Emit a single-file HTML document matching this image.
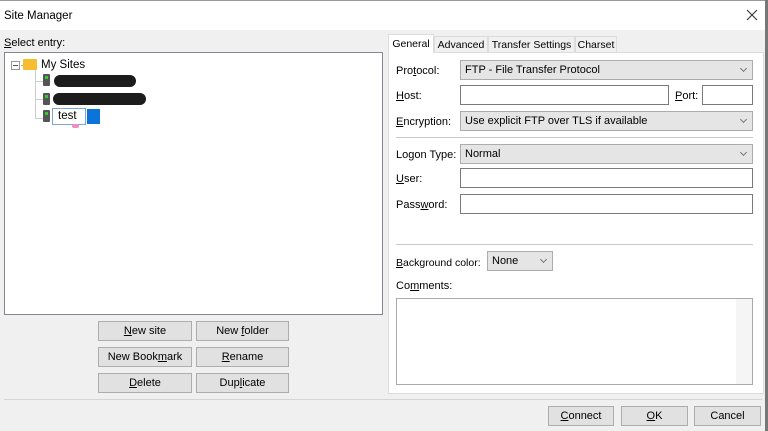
<!DOCTYPE html>
<html><head><style>
*{box-sizing:border-box;margin:0;padding:0}
body{width:768px;height:431px;background:#f0f0f0;font-family:"Liberation Sans",sans-serif;font-size:11px;color:#000;position:relative;overflow:hidden;white-space:nowrap}
.a{position:absolute}
.title{left:0;top:0;width:766px;height:30px;background:#fff;border-top:1px solid #999}
.btn{position:absolute;background:#e1e1e1;border:1px solid #adadad;text-align:center;line-height:18px;font-size:11px}
.inp{position:absolute;background:#fff;border:1px solid #7a7a7a}
.cmb{position:absolute;background:#e5e5e5;border:1px solid #acacac;padding-left:4px;line-height:19px}
.cmb:after{content:"";position:absolute;right:6px;top:5px;width:4px;height:4px;border-right:1px solid #777;border-bottom:1px solid #777;transform:rotate(45deg)}
.lbl{position:absolute}
.sep{position:absolute;height:1px;background:#c8c8c8}
.blk{position:absolute;height:12px;background:#1c1c1c;border-radius:6px}
.pc{position:absolute;width:7px;height:12px;background:#555;border-radius:1px}
.pc:before{content:"";position:absolute;left:2px;top:2px;width:3px;height:3px;background:#3c3}
.tab{position:absolute;top:36px;height:17px;border:1px solid #dcdcdc;line-height:16px;text-align:center}
</style></head><body>
<div class="a title"><span class="a" style="left:4px;top:9px;font-size:11.5px">Site Manager</span>
<svg class="a" style="left:746px;top:8px" width="12" height="12"><path d="M1 1L11 11M11 1L1 11" stroke="#333" stroke-width="1.1"/></svg></div>
<div class="a" style="left:765px;top:0;width:3px;height:431px;background:#777"></div>
<div class="lbl" style="left:4px;top:37px"><u>S</u>elect entry:</div>
<div class="a" style="left:4px;top:52px;width:379px;height:263px;background:#fff;border:1px solid #828790">
 <div class="a" style="left:6px;top:8px;width:9px;height:9px;border:1px solid #999;background:#fff"></div>
 <div class="a" style="left:8px;top:12px;width:5px;height:1px;background:#555"></div>
 <div class="a" style="left:16px;top:12px;width:6px;height:1px;background:#aaa"></div>
 <div class="a" style="left:18px;top:6px;width:14px;height:11px;background:#f5bd2f;border-radius:1px"></div>
 <div class="a" style="left:36px;top:6px;font-size:11.5px">My Sites</div>
 <div class="a" style="left:30px;top:17px;width:1px;height:49px;background:#ccc"></div>
 <div class="a" style="left:30px;top:28px;width:8px;height:1px;background:#ccc"></div>
 <div class="a" style="left:30px;top:46px;width:8px;height:1px;background:#ccc"></div>
 <div class="a" style="left:30px;top:65px;width:8px;height:1px;background:#ccc"></div>
 <div class="pc" style="left:38px;top:21px"></div>
 <div class="pc" style="left:38px;top:40px"></div>
 <div class="pc" style="left:38px;top:57px"></div>
 <div class="blk" style="left:49px;top:22px;width:82px"></div>
 <div class="blk" style="left:48px;top:40px;width:93px"></div>
 <div class="a" style="left:47px;top:55px;width:34px;height:17px;border:1px solid #7aa7d8;background:#fff;padding-left:5px;line-height:15px;font-size:11.5px">test</div>
 <div class="a" style="left:82px;top:56px;width:13px;height:15px;background:#0a74da"></div>
 <div class="a" style="left:67px;top:71px;width:7px;height:4px;background:#f08cc0;border-radius:3px"></div>
</div>
<div class="btn" style="left:98px;top:321px;width:94px;height:20px"><u>N</u>ew site</div>
<div class="btn" style="left:196px;top:321px;width:93px;height:20px">New <u>f</u>older</div>
<div class="btn" style="left:98px;top:347px;width:94px;height:20px">New Book<u>m</u>ark</div>
<div class="btn" style="left:196px;top:347px;width:93px;height:20px"><u>R</u>ename</div>
<div class="btn" style="left:98px;top:373px;width:94px;height:20px"><u>D</u>elete</div>
<div class="btn" style="left:196px;top:373px;width:93px;height:20px">Dup<u>l</u>icate</div>
<!-- tabs -->
<div class="a" style="left:388px;top:52px;width:376px;height:342px;background:#fff;border:1px solid #dcdcdc"></div>
<div class="a" style="left:388px;top:34px;width:46px;height:19px;background:#fff;border:1px solid #dcdcdc;border-bottom:none;line-height:19px;text-align:center;font-size:10.5px">General</div>
<div class="tab" style="left:434px;width:54px;font-size:10.5px">Advanced</div>
<div class="tab" style="left:488px;width:87px;font-size:10.5px">Transfer Settings</div>
<div class="tab" style="left:575px;width:42px;font-size:10.5px">Charset</div>
<div class="lbl" style="left:396px;top:65px">Pro<u>t</u>ocol:</div>
<div class="cmb" style="left:460px;top:60px;width:293px;height:20px">FTP - File Transfer Protocol</div>
<div class="lbl" style="left:396px;top:90px"><u>H</u>ost:</div>
<div class="inp" style="left:460px;top:85px;width:209px;height:20px"></div>
<div class="lbl" style="left:675px;top:90px"><u>P</u>ort:</div>
<div class="inp" style="left:702px;top:85px;width:51px;height:20px"></div>
<div class="lbl" style="left:396px;top:116px"><u>E</u>ncryption:</div>
<div class="cmb" style="left:460px;top:111px;width:293px;height:20px">Use explicit FTP over TLS if available</div>
<div class="sep" style="left:396px;top:137px;width:357px"></div>
<div class="lbl" style="left:396px;top:149px">Logon Type:</div>
<div class="cmb" style="left:460px;top:144px;width:293px;height:20px">Normal</div>
<div class="lbl" style="left:396px;top:173px"><u>U</u>ser:</div>
<div class="inp" style="left:460px;top:168px;width:293px;height:20px"></div>
<div class="lbl" style="left:396px;top:199px">Pass<u>w</u>ord:</div>
<div class="inp" style="left:460px;top:194px;width:293px;height:20px"></div>
<div class="sep" style="left:396px;top:244px;width:357px"></div>
<div class="lbl" style="left:396px;top:257px;font-size:10.5px"><u>B</u>ackground color:</div>
<div class="cmb" style="left:487px;top:251px;width:66px;height:20px">None</div>
<div class="lbl" style="left:396px;top:280px">Co<u>m</u>ments:</div>
<div class="inp" style="left:396px;top:298px;width:357px;height:87px;border-color:#aaa"></div>
<div class="a" style="left:736px;top:299px;width:16px;height:85px;background:#f5f5f5"></div>
<div class="sep" style="left:4px;top:399px;width:758px;background:#d5d5d5"></div>
<div class="btn" style="left:548px;top:406px;width:66px;height:20px"><u>C</u>onnect</div>
<div class="btn" style="left:621px;top:406px;width:67px;height:20px"><u>O</u>K</div>
<div class="btn" style="left:694px;top:406px;width:67px;height:20px">Cancel</div>
</body></html>
